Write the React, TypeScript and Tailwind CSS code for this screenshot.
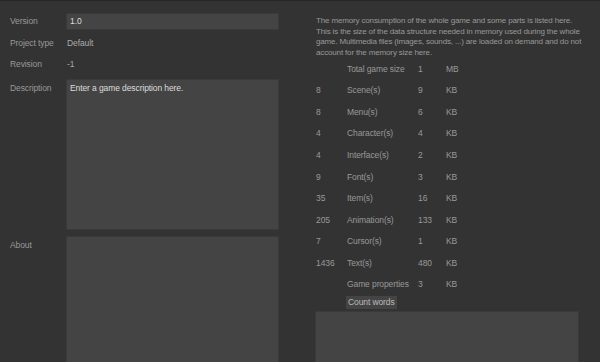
import React from "react";

const font = { fontFamily: '"Liberation Sans", Arial, sans-serif' };

const rows = [
  { count: "", name: "Total game size", size: "1", unit: "MB" },
  { count: "8", name: "Scene(s)", size: "9", unit: "KB" },
  { count: "8", name: "Menu(s)", size: "6", unit: "KB" },
  { count: "4", name: "Character(s)", size: "4", unit: "KB" },
  { count: "4", name: "Interface(s)", size: "2", unit: "KB" },
  { count: "9", name: "Font(s)", size: "3", unit: "KB" },
  { count: "35", name: "Item(s)", size: "16", unit: "KB" },
  { count: "205", name: "Animation(s)", size: "133", unit: "KB" },
  { count: "7", name: "Cursor(s)", size: "1", unit: "KB" },
  { count: "1436", name: "Text(s)", size: "480", unit: "KB" },
  { count: "", name: "Game properties", size: "3", unit: "KB" },
];

function Field({ children }: { children?: React.ReactNode }) {
  return (
    <div className="w-[211px] bg-[#444] shadow-[0_0_0_1px_#3a3a3a] text-[#ddd]">{children}</div>
  );
}

export default function App() {
  return (
    <div
      className="w-[600px] h-[362px] overflow-hidden bg-[#333] border-t border-[#262626] flex text-[8.5px] leading-[10.5px] tracking-[-0.1px] text-[#999]"
      style={font}
    >
      <div className="w-[316px] shrink-0 pl-[10px] pt-[13px] flex flex-col">
        <div className="flex shrink-0 h-[15px] items-center">
          <div className="w-[57px]">Version</div>
          <Field>
            <div className="h-[15px] pl-[3px] flex items-center">1.0</div>
          </Field>
        </div>
        <div className="flex shrink-0 h-[21px] mt-[4px] items-center">
          <div className="w-[57px]">Project type</div>
          <div className="text-[#aaa]">Default</div>
        </div>
        <div className="flex shrink-0 h-[21px] items-center">
          <div className="w-[57px]">Revision</div>
          <div className="text-[#aaa]">-1</div>
        </div>
        <div className="flex shrink-0 mt-[5px]">
          <div className="w-[57px] pt-[3px]">Description</div>
          <Field>
            <div className="h-[149px] px-[3px] pt-[3px]">Enter a game description here.</div>
          </Field>
        </div>
        <div className="flex shrink-0 mt-[8px]">
          <div className="w-[57px] pt-[3px]">About</div>
          <Field>
            <div className="h-[140px]" />
          </Field>
        </div>
      </div>
      <div className="flex-1 pt-[15px] pr-[14px] flex flex-col">
        <p className="shrink-0 whitespace-nowrap text-[8px] tracking-[-0.15px]">
          The memory consumption of the whole game and some parts is listed here.
          <br />
          This is the size of the data structure needed in memory used during the whole
          <br />
          game. Multimedia files (images, sounds, ...) are loaded on demand and do not
          <br />
          account for the memory size here.
        </p>
        <div className="flex flex-col shrink-0">
          {rows.map((r) => (
            <div key={r.name} className="flex h-[21.6px] items-center">
              <div className="w-[31px]">{r.count}</div>
              <div className="w-[71px]">{r.name}</div>
              <div className="w-[28px]">{r.size}</div>
              <div>{r.unit}</div>
            </div>
          ))}
        </div>
        <div className="pl-[30px] shrink-0">
          <button className="bg-[#444] text-[#bbb] px-[2px] h-[13px] leading-[13px]">Count words</button>
        </div>
        <div className="mt-[3px] shrink-0 w-[262px] h-[60px] bg-[#444] shadow-[0_0_0_1px_#3a3a3a]" />
      </div>
    </div>
  );
}
